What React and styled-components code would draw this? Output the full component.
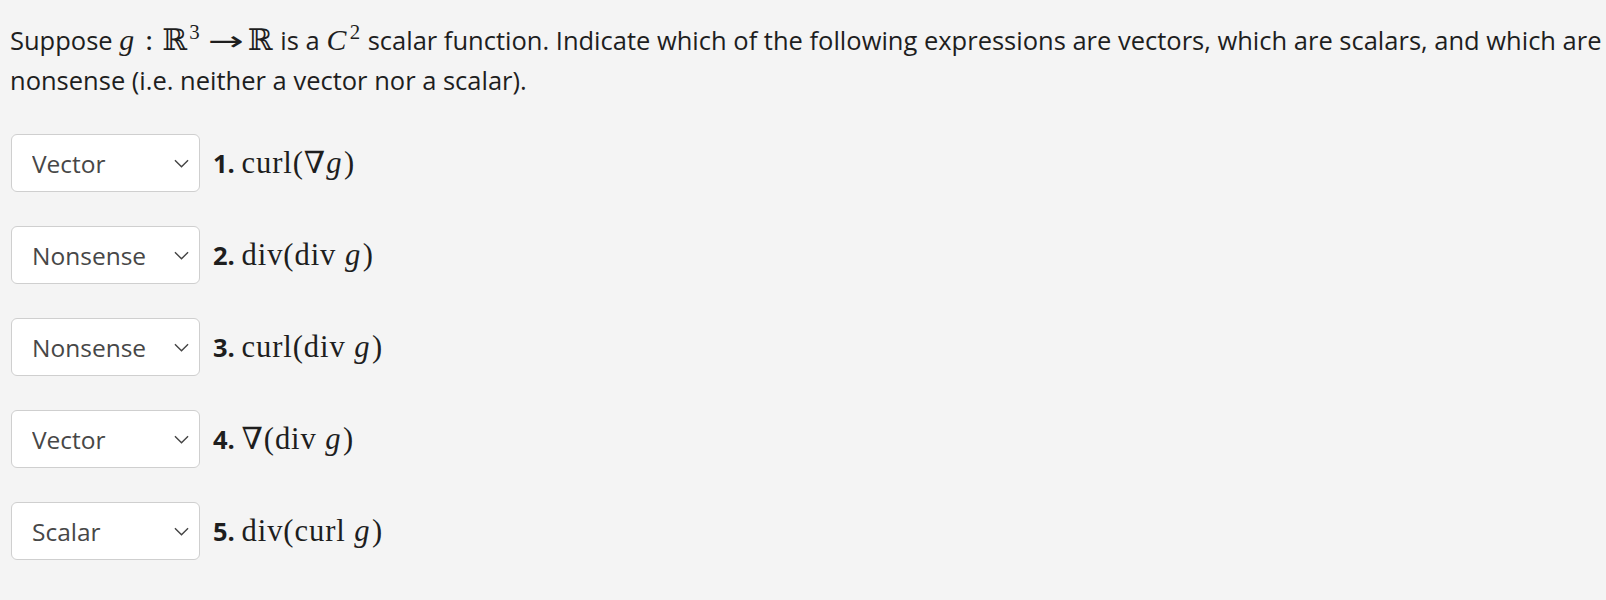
import styled, { createGlobalStyle } from "styled-components";

const GlobalStyle = createGlobalStyle`
  html, body {
    margin: 0;
    padding: 0;
    background: #f4f4f4;
  }
  body {
    font-family: "Open Sans", "Noto Sans", sans-serif;
    color: #1e1e1e;
  }
`;

const items = [
  { answer: "Vector", expr: ["curl", "(", "∇", <i key="g">g</i>, ")"] },
  { answer: "Nonsense", expr: ["div", "(", "div ", <i key="g">g</i>, ")"] },
  { answer: "Nonsense", expr: ["curl", "(", "div ", <i key="g">g</i>, ")"] },
  { answer: "Vector", expr: ["∇", "(", "div ", <i key="g">g</i>, ")"] },
  { answer: "Scalar", expr: ["div", "(", "curl ", <i key="g">g</i>, ")"] },
];

const options = ["Vector", "Scalar", "Nonsense"];

export default function App() {
  return (
    <Page>
      <GlobalStyle />
      <Prompt>
        Suppose <M><i>g</i> : ℝ<sup>3</sup><Arrow>→</Arrow>ℝ</M> is a{" "}
        <M><i>C</i><sup>2</sup></M> scalar function. Indicate which of the following
        expressions are vectors, which are scalars, and which are nonsense (i.e. neither a
        vector nor a scalar).
      </Prompt>
      <List>
        {items.map((item, i) => (
          <Row key={i}>
            <SelectWrap>
              <Select defaultValue={item.answer}>
                {options.map((o) => (
                  <option key={o}>{o}</option>
                ))}
              </Select>
              <Chevron viewBox="0 0 16 9">
                <path d="M1 1 L8 8 L15 1" />
              </Chevron>
            </SelectWrap>
            <Label>
              <b>{i + 1}.</b> <M>{item.expr}</M>
            </Label>
          </Row>
        ))}
      </List>
    </Page>
  );
}

const Page = styled.div`
  padding: 20px 0 0 10px;
  width: 1596px;
  overflow: hidden;
`;

const Prompt = styled.p`
  margin: 0;
  font-size: 25.5px;
  line-height: 40px;
  width: 1596px;
`;

const M = styled.span`
  font-family: "Liberation Serif", "DejaVu Serif", serif;
  font-size: 1.17em;
  letter-spacing: 0.03em;
  line-height: 1;

  i {
    font-style: italic;
    margin-right: 0.05em;
  }

  sup {
    font-size: 0.7em;
    vertical-align: 0.55em;
    line-height: 0;
    margin-left: 0.05em;
  }
`;

const Arrow = styled.span`
  display: inline-block;
  font-family: "DejaVu Sans", sans-serif;
  font-size: 0.9em;
  margin: 0 0.35em 0 0.55em;
  transform: scaleX(1.6);
`;

const List = styled.div`
  display: flex;
  flex-direction: column;
  gap: 34px;
  margin-top: 34px;
`;

const Row = styled.div`
  display: flex;
  align-items: center;
  gap: 13px;
  margin-left: 1px;
`;

const SelectWrap = styled.div`
  position: relative;
  width: 189px;
  height: 58px;
`;

const Select = styled.select`
  appearance: none;
  width: 100%;
  height: 100%;
  box-sizing: border-box;
  border: 1.5px solid #cfcfcf;
  border-radius: 6px;
  background: #fff;
  padding: 1px 0 0 20px;
  font-family: "Open Sans", "Noto Sans", sans-serif;
  font-size: 24.5px;
  color: #474747;
  outline: none;
`;

const Chevron = styled.svg`
  position: absolute;
  right: 11px;
  top: 25px;
  width: 15px;
  height: 9px;
  pointer-events: none;

  path {
    fill: none;
    stroke: #444;
    stroke-width: 1.5;
  }
`;

const Label = styled.div`
  font-size: 25.5px;
  color: #1e1e1e;

  b {
    font-weight: 700;
  }

  ${M} {
    font-size: 1.2em;
  }
`;
